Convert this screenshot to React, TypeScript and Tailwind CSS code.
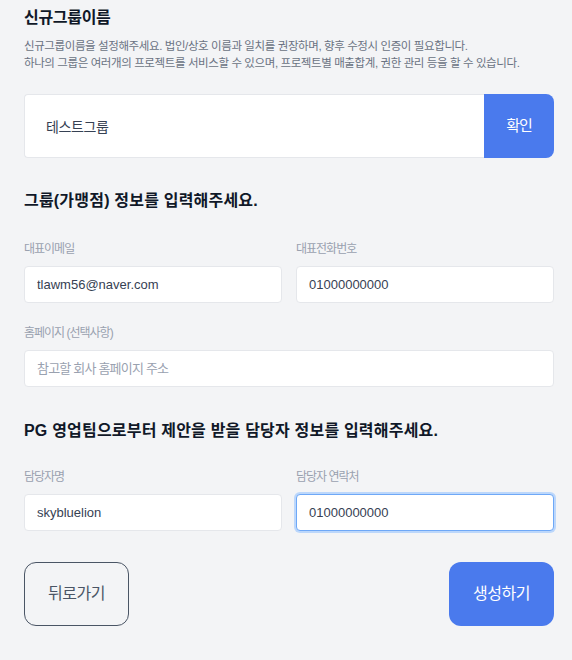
import { useState } from "react";

const font = "font-['Liberation_Sans','Noto_Sans_CJK_KR',sans-serif]";

function Label({ children }: { children: React.ReactNode }) {
  return (
    <label className="mb-2 block text-[12px] leading-[18px] tracking-[-1px] text-gray-400">
      {children}
    </label>
  );
}

function Field({
  label,
  value,
  placeholder,
  focused = false,
}: {
  label: string;
  value?: string;
  placeholder?: string;
  focused?: boolean;
}) {
  const [v, setV] = useState(value ?? "");
  return (
    <div>
      <Label>{label}</Label>
      <input
        value={v}
        onChange={(e) => setV(e.target.value)}
        placeholder={placeholder}
        className={`h-[37px] w-full rounded border bg-white px-3 text-[13px] text-gray-700 outline-none placeholder:text-gray-400 placeholder:tracking-[-0.8px] ${
          focused
            ? "border-[#6ea8f7] ring-2 ring-[#bcd7fb]"
            : "border-gray-200"
        }`}
      />
    </div>
  );
}

export default function App() {
  const [groupName, setGroupName] = useState("테스트그룹");

  return (
    <div className={`min-h-[660px] w-[572px] bg-[#f3f4f6] ${font}`}>
      <div className="w-[554px] pl-6 pt-[6px] pb-[34px]">
        <h1 className="text-[16px] font-bold leading-6 tracking-[-0.3px] text-gray-900">
          신규그룹이름
        </h1>
        <p className="mt-2 text-[11.5px] leading-[17px] tracking-[-0.4px] text-gray-500">
          신규그룹이름을 설정해주세요. 법인/상호 이름과 일치를 권장하며, 향후 수정시 인증이 필요합니다.
          <br />
          하나의 그룹은 여러개의 프로젝트를 서비스할 수 있으며, 프로젝트별 매출합계, 권한 관리 등을 할 수 있습니다.
        </p>

        <div className="mt-[22px] flex h-16">
          <input
            value={groupName}
            onChange={(e) => setGroupName(e.target.value)}
            className="h-full flex-1 rounded-l border border-r-0 border-gray-200 bg-white pl-[21px] text-[14px] tracking-[-0.4px] text-gray-700 outline-none"
          />
          <button className="h-full w-[70px] rounded-r-lg bg-[#4a7aed] text-[15px] tracking-[-1px] text-white">
            확인
          </button>
        </div>

        <h2 className="mt-[31px] text-[16px] font-bold leading-6 tracking-[0.2px] text-gray-900">
          그룹(가맹점) 정보를 입력해주세요.
        </h2>
        <div className="mt-[27px] grid grid-cols-2 gap-x-[14px] gap-y-[21px]">
          <Field label="대표이메일" value="tlawm56@naver.com" />
          <Field label="대표전화번호" value="01000000000" />
          <div className="col-span-2">
            <Field label="홈페이지 (선택사항)" placeholder="참고할 회사 홈페이지 주소" />
          </div>
        </div>

        <h2 className="mt-[32px] text-[16px] font-bold leading-6 tracking-[0.2px] text-gray-900">
          PG 영업팀으로부터 제안을 받을 담당자 정보를 입력해주세요.
        </h2>
        <div className="mt-[25px] grid grid-cols-2 gap-x-[14px]">
          <Field label="담당자명" value="skybluelion" />
          <Field label="담당자 연락처" value="01000000000" focused />
        </div>

        <div className="mt-[31px] flex justify-between">
          <button className="h-16 w-[105px] rounded-xl border border-gray-600 text-[16px] tracking-[-0.5px] text-gray-600">
            뒤로가기
          </button>
          <button className="h-16 w-[105px] rounded-xl bg-[#4a7aed] text-[16px] tracking-[-0.5px] text-white">
            생성하기
          </button>
        </div>
      </div>
    </div>
  );
}
